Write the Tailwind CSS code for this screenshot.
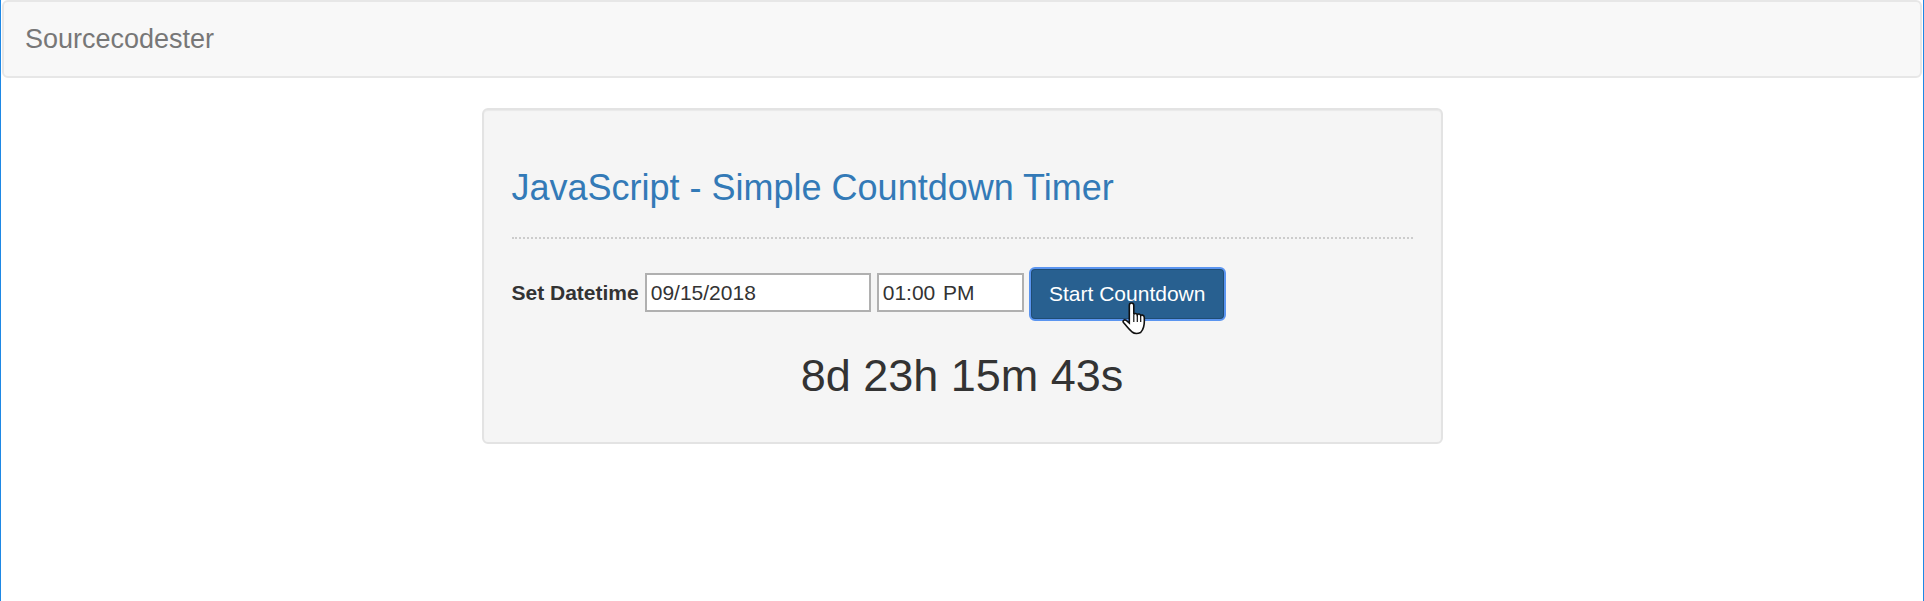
<!DOCTYPE html>
<html>
<head>
<meta charset="utf-8">
<script src="https://cdn.jsdelivr.net/npm/@tailwindcss/browser@4"></script>
</head>
<body class="bg-white font-['Liberation_Sans',Arial,sans-serif] text-[21px] text-[#333]">
<div class="relative h-[601px] overflow-hidden border-x border-x-[#1e88e5] px-px">
  <nav class="flex h-[78px] items-center rounded-[6px] border-2 border-[#e7e7e7] bg-[#f8f8f8] px-[21px]">
    <span class="text-[27px] leading-[30px] text-[#777]">Sourcecodester</span>
  </nav>
  <main class="mx-auto mt-[30px] h-[336px] w-[961px] rounded-[6px] border-2 border-[#e3e3e3] bg-[#f5f5f5] px-[28px] pt-[28px] shadow-[inset_0_1px_1px_rgba(0,0,0,0.05)]">
    <h3 class="mt-[30px] text-[36px] leading-[40px] font-normal text-[#337ab7]">JavaScript - Simple Countdown Timer</h3>
    <hr class="mt-[29px] mb-[29px] border-0 border-t-2 border-dotted border-t-[#ccc]">
    <div class="flex items-start">
      <label class="mt-[5px] mr-[6px] text-[21px] font-bold leading-[39px]">Set Datetime</label>
      <input type="text" readonly value="09/15/2018" class="mt-[5px] h-[39px] w-[226px] border-2 border-[#b0b0b0] bg-white px-[4px] text-[21px] text-[#333] outline-none">
      <input type="text" readonly value="01:00 PM" class="mt-[5px] ml-[6px] h-[39px] w-[147px] border-2 border-[#b0b0b0] bg-white px-[4px] text-[21px] text-[#333] outline-none [word-spacing:2px]">
      <button class="relative ml-[6px] h-[52px] w-[195px] rounded-[5px] border-2 border-[#204d74] bg-[#286090] text-[21px] text-white outline-2 -outline-offset-1 outline-[#5b95f0]">
        Start Countdown
        <svg class="absolute left-[90px] top-[32px]" width="24" height="33" viewBox="0 0 24 33">
          <path d="M9.500 1c1.400 0 2.300 1 2.300 2.400V12.500c.5-1.400 3-1.400 3.500.4.5-1.300 3-1.200 3.400.7.6-1 3.300-.7 3.500 1.400.3 3.500.2 7-.6 10-.6 2.400-1.600 4-3 5.500-3 1.300-6.500 1-8.500-.5C7 27.500 4 23.500 1.500 20.500c-1.200-1.700.8-3.300 2.500-2.300L7.300 21V3.400C7.300 2 8.200 1 9.500 1z" fill="#fff" stroke="#111" stroke-width="1.600"/>
          <path d="M11.800 12.500V20M15.300 13V20M18.700 13.600V20" fill="none" stroke="#111" stroke-width="1.200"/>
        </svg>
      </button>
    </div>
    <h2 class="mt-[31px] text-center text-[45px] leading-[50px] font-normal">8d 23h 15m 43s</h2>
  </main>
</div>
</body>
</html>
